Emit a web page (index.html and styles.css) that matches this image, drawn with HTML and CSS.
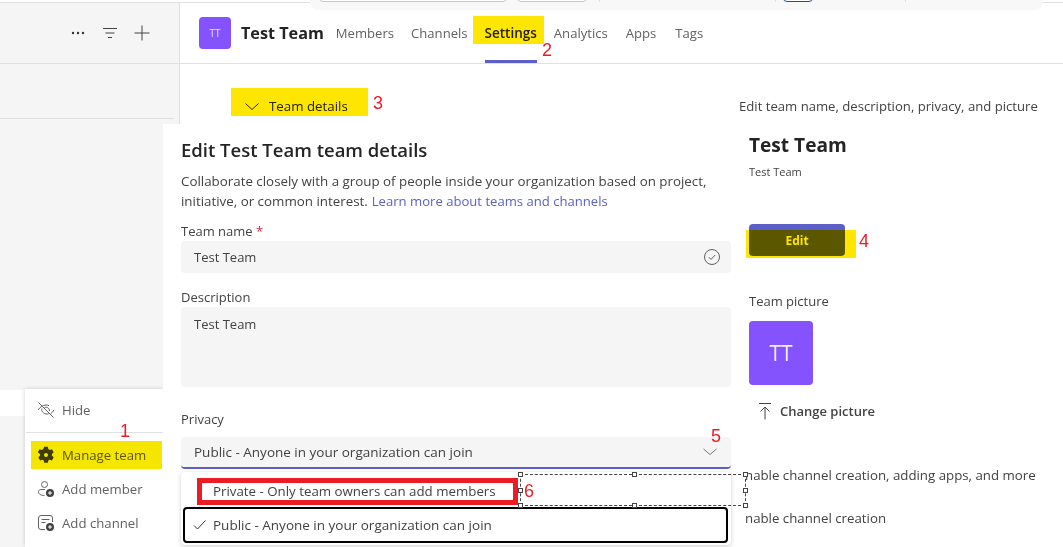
FILE: index.html
```html
<!DOCTYPE html>
<html lang="en">
<head>
<meta charset="utf-8">
<title>Test Team</title>
<link rel="stylesheet" href="styles.css">
</head>
<body>
<div class="page">
  <aside class="sidebar">
    <div class="side-head">
      <svg class="ic dots" width="14" height="18" viewBox="0 0 14 18"><circle cx="2" cy="9" r="1.200" fill="#333"/><circle cx="7" cy="9" r="1.200" fill="#333"/><circle cx="12" cy="9" r="1.200" fill="#333"/></svg>
      <svg class="ic" width="18" height="18" viewBox="0 0 18 18"><path d="M2 4.500h14M4.500 9h9M7 13.500h4" stroke="#424242" fill="none"/></svg>
      <svg class="ic" width="18" height="18" viewBox="0 0 18 18"><path d="M9 1.500v15M1.500 9h15" stroke="#424242" fill="none"/></svg>
    </div>
    <div class="side-row"></div>
    <div class="side-gap"></div>
    <div class="side-active"></div>
  </aside>
  <main class="main">
    <header class="topbar">
      <div class="avatar-sm">TT</div>
      <h1 class="team-title">Test Team</h1>
      <nav class="tabs">
        <span class="tab">Members</span>
        <span class="tab">Channels</span>
        <span class="tab active">Settings</span>
        <span class="tab">Analytics</span>
        <span class="tab">Apps</span>
        <span class="tab">Tags</span>
      </nav>
    </header>
    <section class="content">
      <div class="left-col">
        <div class="section-head">
          <svg width="14" height="14" viewBox="0 0 14 14"><path d="M.5 4.500L7 10.500l6.500-6" stroke="#333" fill="none"/></svg>
          <span>Team details</span>
        </div>
      </div>
      <div class="right-col">
        <p class="right-desc">Edit team name, description, privacy, and picture</p>
        <h2 class="right-title">Test Team</h2>
        <p class="right-sub">Test Team</p>
        <button class="edit-btn">Edit</button>
        <p class="pic-label">Team picture</p>
        <div class="avatar-lg">TT</div>
        <div class="change-pic">
          <svg width="16" height="18" viewBox="0 0 16 18"><path d="M2 1.500h12M8 17.500V5M3.500 9.500L8 5l4.500 4.500" stroke="#424242" fill="none"/></svg>
          <span>Change picture</span>
        </div>
        <p class="partial first">nable channel creation, adding apps, and more</p>
        <p class="partial second">nable channel creation</p>
      </div>
    </section>
  </main>

  <div class="menu">
    <div class="menu-item">
      <svg width="18" height="18" viewBox="0 0 18 18"><path d="M1.500 1.500l15 15M1 9c2-3 5-5 8-5 1 0 2 .2 3 .7M17 9c-1 1.600-2 2.800-3.300 3.700M5 7.500C4 8.500 5 12 9 13c1 .2 2 0 2.700-.3M7.500 6.500c2-1 5 .5 5 3.500" stroke="#616161" fill="none"/></svg>
      <span>Hide</span>
    </div>
    <div class="menu-sep"></div>
    <div class="menu-item">
      <svg width="18" height="18" viewBox="0 0 18 18"><path fill-rule="evenodd" d="M7.200.8h3.600l.5 2.300 1.400.8 2.200-.7 1.800 3.100-1.700 1.600v1.800l1.700 1.600-1.800 3.100-2.200-.7-1.400.8-.5 2.300H7.200l-.5-2.300-1.400-.8-2.200.7-1.800-3.100 1.700-1.600V8.100L.8 6.300l1.800-3.100 2.200.7 1.400-.8zM9 7a2 2 0 1 0 0 4 2 2 0 0 0 0-4z" fill="#424242"/></svg>
      <span>Manage team</span>
    </div>
    <div class="menu-item">
      <svg width="18" height="18" viewBox="0 0 18 18"><circle cx="7.500" cy="4.500" r="3" stroke="#616161" fill="none"/><path d="M8 9.500H3.500C2 9.500 1.500 11 1.500 12c0 2 2.500 3.500 6 3.500" stroke="#616161" fill="none"/><circle cx="13" cy="13" r="4" fill="#424242"/><path d="M13 11v4M11 13h4" stroke="#fff"/></svg>
      <span>Add member</span>
    </div>
    <div class="menu-item">
      <svg width="18" height="18" viewBox="0 0 18 18"><path d="M8 15.500H4A2.500 2.500 0 0 1 1.500 13V4A2.500 2.500 0 0 1 4 1.500h9A2.500 2.500 0 0 1 15.500 4v4M4.500 5.500h8M4.500 8.500h4" stroke="#616161" fill="none"/><circle cx="13" cy="13" r="4" fill="#424242"/><path d="M13 11v4M11 13h4" stroke="#fff"/></svg>
      <span>Add channel</span>
    </div>
  </div>

  <div class="dialog">
    <h2 class="dlg-title">Edit Test Team team details</h2>
    <div class="dlg-text">
      <div>Collaborate closely with a group of people inside your organization based on project,</div>
      <div class="dlg-line"><span>initiative, or common interest.</span><a class="link">Learn more about teams and channels</a></div>
    </div>
    <label class="label name-label">Team name <span class="req">*</span></label>
    <div class="field">
      <span>Test Team</span>
      <svg width="18" height="18" viewBox="0 0 18 18"><circle cx="9" cy="9" r="7.500" stroke="#616161" fill="none"/><path d="M5.800 9.200l2.200 2.200 4.200-4.400" stroke="#616161" fill="none"/></svg>
    </div>
    <label class="label desc-label">Description</label>
    <div class="field area">Test Team</div>
    <label class="label priv-label">Privacy</label>
    <div class="field select">
      <span class="wide">Public - Anyone in your organization can join</span>
      <svg width="16" height="16" viewBox="0 0 16 16"><path d="M1.500 5L8 10.500 14.500 5" stroke="#757575" fill="none"/></svg>
    </div>
    <div class="listbox">
      <div class="option">Private - Only team owners can add members</div>
      <div class="option selected">
        <svg width="14" height="14" viewBox="0 0 14 14"><path d="M1 7.500l3.500 3.500 8-8.500" stroke="#333" fill="none"/></svg>
        <span class="wide">Public - Anyone in your organization can join</span>
      </div>
    </div>
  </div>

  <div class="top-pill">
    <span class="pill-a"></span><span class="pill-b"></span><span class="pill-c"></span>
    <i class="pill-sep s1"></i><i class="pill-sep s2"></i><i class="pill-sep s3"></i>
  </div>

  <div class="hl hl-settings"></div>
  <div class="hl hl-team"></div>
  <div class="hl hl-edit"></div>
  <div class="hl hl-manage"></div>
  <div class="red-box"></div>
  <div class="sel-box">
    <i class="h tl"></i><i class="h tm"></i><i class="h tr"></i>
    <i class="h ml"></i><i class="h mr"></i>
    <i class="h bl"></i><i class="h bm"></i><i class="h br"></i>
  </div>
  <span class="num n1">1</span>
  <span class="num n2">2</span>
  <span class="num n3">3</span>
  <span class="num n4">4</span>
  <span class="num n5">5</span>
  <span class="num n6">6</span>
</div>
</body>
</html>
```
FILE: styles.css
```css
* { box-sizing: border-box; }
html, body { margin: 0; padding: 0; }
body { font-family: "Open Sans", "Liberation Sans", sans-serif; font-size: 13px; color: #424242; background: #fff; }
p, h1, h2 { margin: 0; }
.page { position: relative; width: 1063px; height: 547px; overflow: hidden; display: flex; background: #fff; }

.sidebar { width: 180px; flex: none; background: #f5f5f5; border-right: 1px solid #e0e0e0; margin-top: 2px; border-top: 1px solid #e0e0e0; display: flex; flex-direction: column; }
.side-head { height: 61px; flex: none; display: flex; align-items: center; justify-content: flex-end; gap: 14px; padding-right: 28px; border-bottom: 1px solid #e0e0e0; }
.dots { margin-right: 2px; }
.ic { display: block; }
.side-row { height: 55px; flex: none; border-bottom: 1px solid #e0e0e0; margin-right: 5px; }
.side-gap { height: 271px; flex: none; }
.side-active { height: 26px; flex: none; background: #fff; }

.main { flex: 1; display: flex; flex-direction: column; margin-top: 2px; border-top: 1px solid #e0e0e0; }
.topbar { height: 61px; flex: none; padding: 14px 0 0 19px; display: flex; align-items: flex-start; border-bottom: 1px solid #e0e0e0; }
.avatar-sm { width: 32px; height: 32px; border-radius: 4px; background: #8553fe; color: #e8defe; font-size: 10px; display: flex; align-items: center; justify-content: center; }
.team-title { font-size: 16.200px; font-weight: 700; color: #242424; margin-left: 10px; line-height: 33px; }
.tabs { display: flex; gap: 17px; margin-left: 12px; line-height: 32px; font-size: 13.100px; }
.tab { color: #616161; }
.tab:nth-child(5) { margin-left: 1px; }
.tab:nth-child(6) { margin-left: 2px; }
.tab.active { color: #242424; font-weight: 600; font-size: 13.500px; position: relative; }
.tab.active::after { content: ""; position: absolute; left: 0; right: 0; top: 43px; height: 3px; background: #5b5fc7; }

.content { flex: 1; display: flex; }
.left-col { width: 559px; flex: none; padding: 33px 0 0 65px; }
.section-head { display: flex; align-items: center; gap: 10px; color: #242424; font-size: 13.300px; }
.right-col { flex: 1; padding-top: 33px; }
.right-desc { line-height: 18px; font-size: 13.130px; }
.right-title { font-size: 19.100px; font-weight: 700; color: #242424; margin: 16px 0 0 10px; line-height: 28px; }
.right-sub { font-size: 11px; margin: 5px 0 0 10px; line-height: 16px; color: #424242; }
.edit-btn { display: block; width: 96px; height: 32px; margin: 44px 0 0 10px; border: 0; border-radius: 4px; background: #5b5fc7; color: #fff; font: 700 12px "Open Sans", sans-serif; }
.pic-label { margin: 36px 0 0 10px; line-height: 18px; }
.avatar-lg { width: 64px; height: 64px; margin: 11px 0 0 10px; border-radius: 4px; background: #8553fe; color: #f2ecff; font-size: 21px; display: flex; align-items: center; justify-content: center; }
.change-pic { display: flex; align-items: center; gap: 7px; margin: 17px 0 0 18px; font-weight: 600; color: #424242; line-height: 18px; }
.partial { margin-top: 46px; line-height: 18px; margin-left: 6px; white-space: nowrap; font-size: 13.270px; }
.partial.second { margin-top: 25px; }

.dialog { position: absolute; left: 163px; top: 124px; width: 581px; height: 423px; background: #fff; padding: 13px 0 0 18px; }
.dlg-title { font-size: 18.500px; font-weight: 600; color: #242424; line-height: 26px; }
.dlg-text { width: 545px; margin-top: 8px; line-height: 20px; color: #424242; font-size: 13.350px; }
.dlg-line { display: flex; gap: 4px; }
.link { color: #5b5fc7; font-size: 13.100px; }
.label { display: block; line-height: 18px; color: #424242; }
.name-label { margin-top: 11px; }
.req { color: #c4314b; }
.field { width: 550px; height: 32px; margin-top: 1px; border-radius: 4px; background: #f5f5f5; padding: 0 10px 0 13px; display: flex; align-items: center; justify-content: space-between; color: #424242; }
.wide { font-size: 13.500px; }
.desc-label { margin-top: 15px; }
.field.area { height: 80px; margin-top: 1px; padding-top: 8px; align-items: flex-start; }
.priv-label { margin-top: 23px; }
.field.select { margin-top: 9px; border-bottom: 2px solid #5b5fc7; padding-right: 13px; }
.listbox { width: 550px; margin-top: 3px; background: #fff; border-radius: 4px; box-shadow: 0 1px 4px rgba(0,0,0,.2); padding: 2px 3px 0 2px; height: 73px; }
.option { height: 33px; padding-left: 30px; display: flex; align-items: center; color: #424242; font-size: 13.300px; }
.option.selected { border: 2px solid #000; border-radius: 4px; height: 36px; padding-left: 8px; gap: 6px; }

.menu { position: absolute; left: 25px; top: 389px; width: 138px; height: 158px; background: #fff; box-shadow: 0 0 4px rgba(0,0,0,.18); padding-top: 4px; font-size: 13.200px; }
.menu-item { display: flex; align-items: center; gap: 7px; height: 34px; padding-left: 12px; color: #616161; }
.menu-sep { height: 1px; background: #e0e0e0; margin: 5px 0 5px 1px; }

.top-pill { position: absolute; left: 310px; top: 0; width: 733px; height: 10px; background: #f8f8f8; border-radius: 0 0 8px 8px; }
.top-pill span { position: absolute; top: -6px; height: 8px; background: #fff; border: 1px solid #c8c8c8; border-radius: 4px; }
.pill-a { left: 9px; width: 188px; }
.pill-b { left: 207px; width: 70px; }
.pill-c { left: 473px; width: 30px; border-color: #1a4ea3 !important; }
.pill-sep { position: absolute; top: 0; width: 1px; height: 2px; background: #e0e0e0; }
.s1 { left: 289px; } .s2 { left: 465px; } .s3 { left: 595px; }

.hl { position: absolute; background: #ffe600; mix-blend-mode: multiply; }
.hl-settings { left: 473px; top: 16px; width: 71px; height: 28px; }
.hl-team { left: 231px; top: 88px; width: 137px; height: 28px; }
.hl-edit { left: 746px; top: 230px; width: 110px; height: 28px; }
.hl-manage { left: 31px; top: 441px; width: 131px; height: 28px; background: #f5e600; }

.red-box { position: absolute; left: 197px; top: 478px; width: 321px; height: 27px; border: 5px solid #ed1c24; }
.sel-box { position: absolute; left: 520px; top: 474px; width: 226px; height: 32px; border: 1px dashed #444; }
.h { position: absolute; width: 5px; height: 5px; background: #fff; border: 1px solid #444; }
.tl { left: -3px; top: -3px; } .tm { left: 111px; top: -3px; } .tr { right: -3px; top: -3px; }
.ml { left: -3px; top: 13px; } .mr { right: -3px; top: 13px; }
.bl { left: -3px; bottom: -3px; } .bm { left: 111px; bottom: -3px; } .br { right: -3px; bottom: -3px; }

.num { position: absolute; color: #ed1c24; font-family: "Liberation Sans", sans-serif; font-size: 18px; line-height: 20px; }
.n1 { left: 120px; top: 421px; }
.n2 { left: 542px; top: 40px; }
.n3 { left: 373px; top: 93px; }
.n4 { left: 859px; top: 231px; }
.n5 { left: 711px; top: 426px; }
.n6 { left: 524px; top: 481px; }
```
